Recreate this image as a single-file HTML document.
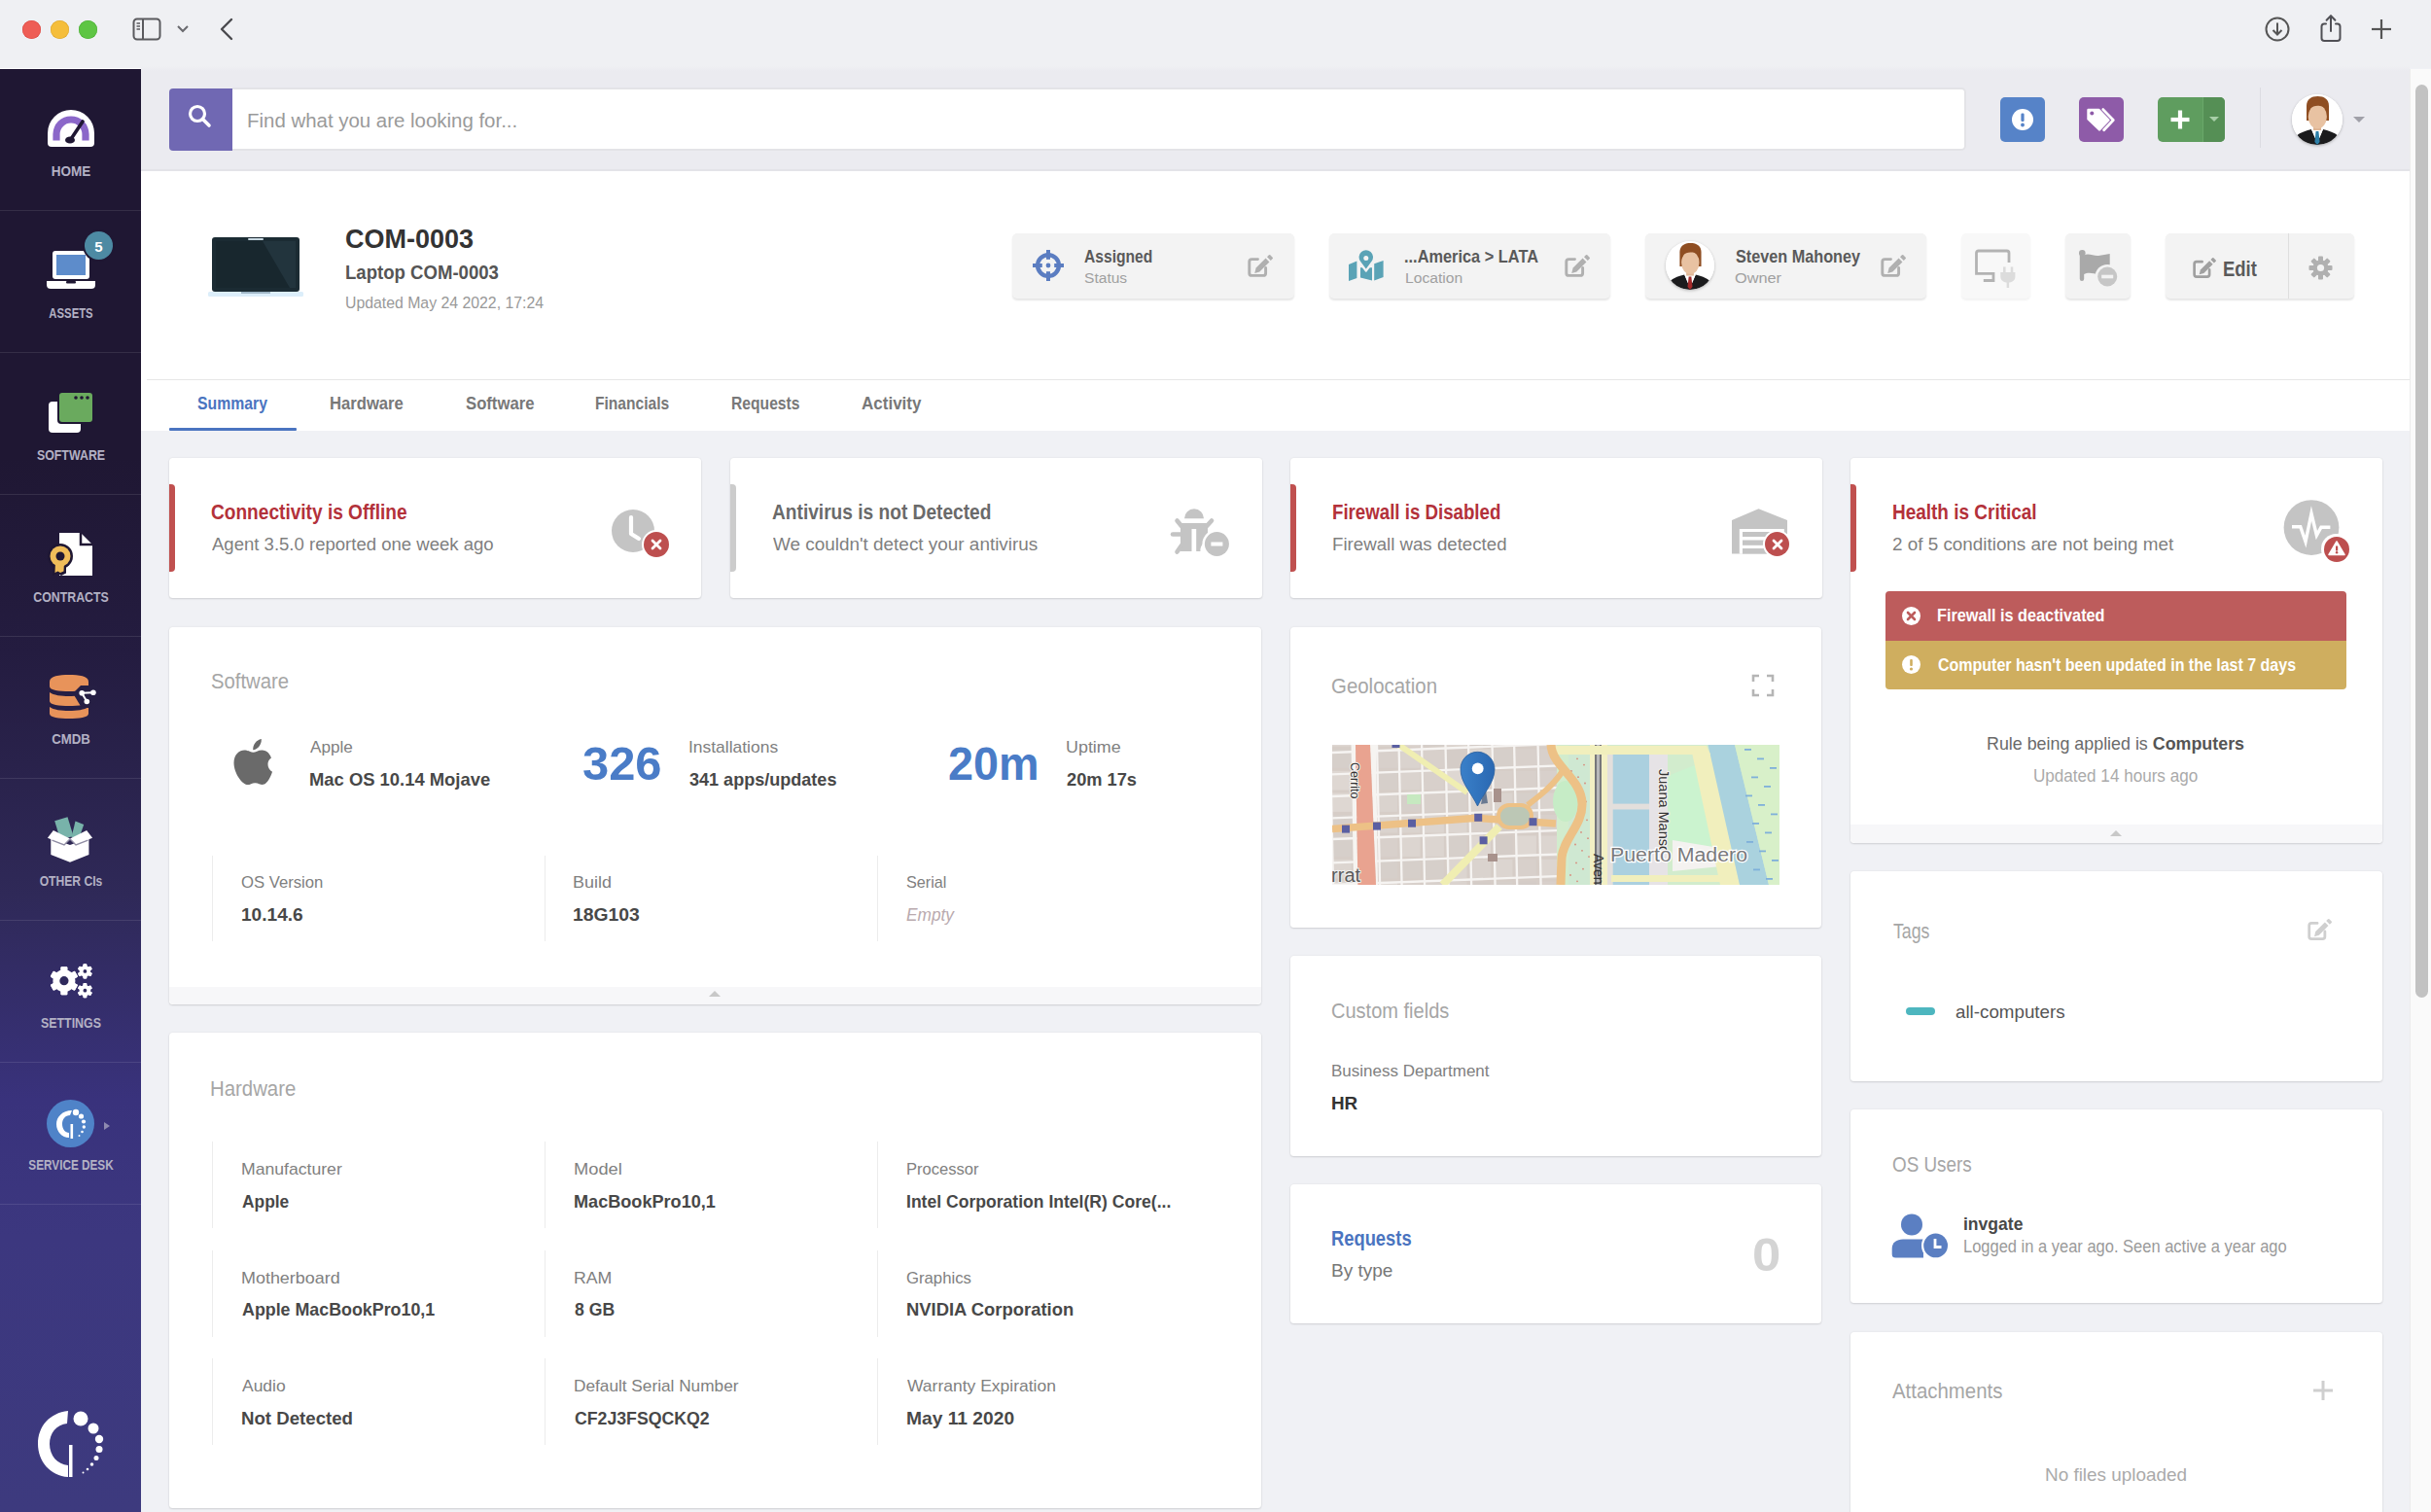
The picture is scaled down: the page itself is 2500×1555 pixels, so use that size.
<!DOCTYPE html><html><head><meta charset="utf-8"><title>COM-0003</title><style>
*{margin:0;padding:0;box-sizing:border-box}
html,body{width:2500px;height:1555px;overflow:hidden;background:#f0f1f5;font-family:"Liberation Sans",sans-serif}
.t{position:absolute;line-height:1;white-space:nowrap}
.b{position:absolute;display:block}
.card{position:absolute;background:#fff;border-radius:3.5px;box-shadow:0 1px 2px rgba(0,0,0,.12),0 0 2px rgba(0,0,0,.08)}
.sc{position:absolute;background:#f3f3f3;border-radius:5px;box-shadow:0 2px 2px rgba(0,0,0,.10)}
</style></head><body><div class="b" style="left:0px;top:0px;width:2500px;height:70px;background:#eff0f3"></div><div class="b" style="left:23.0px;top:21px;width:19px;height:19px;border-radius:50%;background:#ee5d55;box-shadow:inset 0 0 0 0.5px #d9463f"></div><div class="b" style="left:52.0px;top:21px;width:19px;height:19px;border-radius:50%;background:#f5be3b;box-shadow:inset 0 0 0 0.5px #dba42a"></div><div class="b" style="left:81.0px;top:21px;width:19px;height:19px;border-radius:50%;background:#5ec544;box-shadow:inset 0 0 0 0.5px #48ad32"></div><svg class="b" style="left:134px;top:17px;" width="34" height="26" viewBox="0 0 34 26"><rect x="3.5" y="2.5" width="27" height="21" rx="3.5" fill="none" stroke="#5a5a5e" stroke-width="2"/><line x1="13" y1="3" x2="13" y2="23" stroke="#5a5a5e" stroke-width="2"/><g stroke="#5a5a5e" stroke-width="1.5"><line x1="6.5" y1="7" x2="10" y2="7"/><line x1="6.5" y1="10" x2="10" y2="10"/><line x1="6.5" y1="13" x2="10" y2="13"/></g></svg><svg class="b" style="left:180px;top:24px;" width="16" height="12" viewBox="0 0 16 12"><polyline points="3,3 8,8 13,3" fill="none" stroke="#6a6a6e" stroke-width="2"/></svg><svg class="b" style="left:222px;top:17px;" width="22" height="26" viewBox="0 0 22 26"><polyline points="16,3 6,13 16,23" fill="none" stroke="#4a4a4e" stroke-width="2.4" stroke-linecap="round" stroke-linejoin="round"/></svg><svg class="b" style="left:2328px;top:16px;" width="28" height="28" viewBox="0 0 28 28"><circle cx="14" cy="14" r="11.5" fill="none" stroke="#555" stroke-width="2"/><line x1="14" y1="7.5" x2="14" y2="19" stroke="#555" stroke-width="2"/><polyline points="9.5,15 14,19.5 18.5,15" fill="none" stroke="#555" stroke-width="2"/></svg><svg class="b" style="left:2383px;top:14px;" width="28" height="32" viewBox="0 0 28 32"><path d="M9 10.5 H7.3 Q4.5 10.5 4.5 13.3 V25.2 Q4.5 28 7.3 28 H20.7 Q23.5 28 23.5 25.2 V13.3 Q23.5 10.5 20.7 10.5 H19" fill="none" stroke="#505055" stroke-width="2" stroke-linecap="round"/><line x1="14" y1="2.5" x2="14" y2="18" stroke="#505055" stroke-width="2" stroke-linecap="round"/><polyline points="9.6,6.8 14,2.2 18.4,6.8" fill="none" stroke="#505055" stroke-width="2" stroke-linecap="round" stroke-linejoin="round"/></svg><svg class="b" style="left:2435px;top:16px;" width="28" height="28" viewBox="0 0 28 28"><line x1="14" y1="4" x2="14" y2="24" stroke="#555" stroke-width="2.2"/><line x1="4" y1="14" x2="24" y2="14" stroke="#555" stroke-width="2.2"/></svg><div class="b" style="left:0px;top:71px;width:145px;height:1484px;background:linear-gradient(180deg,#1f1733 0px,#1f1733 400px,#241c40 600px,#2f2958 850px,#39327c 1060px,#3c377f 1200px,#3d3a7e 1484px)"></div><div class="b" style="left:0px;top:70px;width:145px;height:1px;background:#fff"></div><div class="b" style="left:0px;top:216px;width:145px;height:1px;background:rgba(255,255,255,.10)"></div><div class="b" style="left:0px;top:362px;width:145px;height:1px;background:rgba(255,255,255,.10)"></div><div class="b" style="left:0px;top:508px;width:145px;height:1px;background:rgba(255,255,255,.10)"></div><div class="b" style="left:0px;top:654px;width:145px;height:1px;background:rgba(255,255,255,.10)"></div><div class="b" style="left:0px;top:800px;width:145px;height:1px;background:rgba(255,255,255,.10)"></div><div class="b" style="left:0px;top:946px;width:145px;height:1px;background:rgba(255,255,255,.10)"></div><div class="b" style="left:0px;top:1092px;width:145px;height:1px;background:rgba(255,255,255,.10)"></div><div class="b" style="left:0px;top:1238px;width:145px;height:1px;background:rgba(255,255,255,.10)"></div><div class="t" id="t1" style="left:72.5px;top:169.18px;font-size:14.2px;color:#b3b1c4;font-weight:700;transform:scaleX(0.9524) translateX(-50%);transform-origin:0 0;">HOME</div><div class="t" id="t2" style="left:72.5px;top:315.18px;font-size:14.2px;color:#b3b1c4;font-weight:700;transform:scaleX(0.7982) translateX(-50%);transform-origin:0 0;">ASSETS</div><div class="t" id="t3" style="left:72.5px;top:461.18px;font-size:14.2px;color:#b3b1c4;font-weight:700;transform:scaleX(0.8728) translateX(-50%);transform-origin:0 0;">SOFTWARE</div><div class="t" id="t4" style="left:72.5px;top:607.18px;font-size:14.2px;color:#b3b1c4;font-weight:700;transform:scaleX(0.8697) translateX(-50%);transform-origin:0 0;">CONTRACTS</div><div class="t" id="t5" style="left:72.5px;top:753.18px;font-size:14.2px;color:#b3b1c4;font-weight:700;transform:scaleX(0.9302) translateX(-50%);transform-origin:0 0;">CMDB</div><div class="t" id="t6" style="left:72.5px;top:899.18px;font-size:14.2px;color:#b3b1c4;font-weight:700;transform:scaleX(0.8533) translateX(-50%);transform-origin:0 0;">OTHER CIs</div><div class="t" id="t7" style="left:72.5px;top:1045.18px;font-size:14.2px;color:#b3b1c4;font-weight:700;transform:scaleX(0.8732) translateX(-50%);transform-origin:0 0;">SETTINGS</div><div class="t" id="t8" style="left:72.5px;top:1191.18px;font-size:14.2px;color:#b3b1c4;font-weight:700;transform:scaleX(0.8286) translateX(-50%);transform-origin:0 0;">SERVICE DESK</div><svg class="b" style="left:46px;top:110px;" width="54" height="44" viewBox="0 0 54 44"><path d="M3 27 A24 24 0 0 1 51 27 V37 Q51 41 47 41 H7 Q3 41 3 37 Z" fill="#fff"/>
<path d="M8.4 34.5 V28 A18.6 18.6 0 0 1 45.6 28 V34.5 H38.4 V28 A11.4 11.4 0 0 0 15.6 28 V34.5 Z" fill="#8b67c9"/>
<line x1="27" y1="33" x2="39" y2="15" stroke="#1f1733" stroke-width="3.6" stroke-linecap="round"/>
<ellipse cx="26" cy="34" rx="5" ry="3.6" fill="#1f1733"/></svg><svg class="b" style="left:46px;top:254px;" width="54" height="46" viewBox="0 0 54 46"><rect x="8" y="4" width="38" height="29" rx="3" fill="#fff"/>
<rect x="12" y="8" width="30" height="21" fill="#5d8ccb"/>
<path d="M2 35 H52 V39 C52 42 50 43 48 43 H6 C4 43 2 42 2 39 Z" fill="#fff"/>
<rect x="22" y="35" width="10" height="2.5" rx="1" fill="#1f1733"/></svg><div class="b" style="left:85px;top:236px;width:33px;height:33px;border-radius:50%;background:#1f1733"></div><div class="b" style="left:87px;top:238px;width:29px;height:29px;border-radius:50%;background:#4d8aa3"></div><div class="t" id="t9" style="left:101.5px;top:245.60px;font-size:15px;color:#fff;font-weight:700;transform:scaleX(1.0000) translateX(-50%);transform-origin:0 0;">5</div><svg class="b" style="left:46px;top:400px;" width="54" height="48" viewBox="0 0 54 48"><rect x="4" y="13" width="33" height="32" rx="4" fill="#fff"/>
<rect x="13" y="2" width="38" height="34" rx="4" fill="#1f1733"/>
<rect x="15" y="4" width="34" height="30" rx="3" fill="#6aaa5e"/>
<g fill="#1f1733"><circle cx="32" cy="9" r="1.8"/><circle cx="38" cy="9" r="1.8"/><circle cx="44" cy="9" r="1.8"/></g></svg><svg class="b" style="left:44px;top:545px;" width="56" height="50" viewBox="0 0 56 50"><path d="M17 3 H39 L51 15 V47 H17 Z" fill="#fff"/>
<path d="M39 3 V15 H51" fill="none" stroke="#1f1733" stroke-width="2.5"/>
<circle cx="18" cy="27" r="13" fill="#1f1733"/>
<path d="M11 33 L10 47 L15 44.5 L19 47 L24 44.5 L24 33 Z" fill="#1f1733"/>
<path d="M13 33 L12.5 44 L15.5 42.5 L18 44 L21.5 42.5 L22 33 Z" fill="#f0bd5a"/>
<circle cx="18" cy="27" r="10.5" fill="#f0bd5a"/>
<circle cx="18" cy="27" r="4.5" fill="#1f1733"/></svg><svg class="b" style="left:48px;top:692px;" width="54" height="52" viewBox="0 0 54 52"><g fill="#e8935a">
<path d="M3 9 C3 3 13 2 23 2 C33 2 43 3 43 9 V14 C43 18 33 19 23 19 C13 19 3 18 3 14 Z"/>
<path d="M3 20 C7 23 15 24 23 24 C31 24 39 23 43 20 V29 C43 33 33 34 23 34 C13 34 3 33 3 29 Z"/>
<path d="M3 35 C7 38 15 39 23 39 C31 39 39 38 43 35 V42 C43 46 33 47 23 47 C13 47 3 46 3 42 Z"/>
</g>
<path d="M27 21 L35 13 H52 V28 L44 36 H36 Z" fill="#261f44"/>
<g stroke="#fff" stroke-width="2"><line x1="36.2" y1="20.8" x2="47.9" y2="20.3"/><line x1="36.2" y1="20.8" x2="41.3" y2="29.5"/></g>
<g fill="#fff"><circle cx="36.2" cy="20.8" r="2.8"/><circle cx="47.9" cy="20.3" r="2.8"/><circle cx="41.3" cy="29.5" r="2.8"/></g></svg><svg class="b" style="left:46px;top:836px;" width="52" height="54" viewBox="0 0 52 54"><path d="M10.2 8.2 L23.5 4.3 L29.5 24 L16 27.5 Z" fill="#78b3aa"/>
<path d="M31.5 8.6 L40.2 12 L35 27 L27.5 25 Z" fill="#78b3aa"/>
<path d="M6.3 26 L26 33 L45.4 26 V43 L26 50.7 L6.3 43 Z" fill="#fff"/>
<path d="M2.9 25.8 L8.9 18 L26 26.6 L20 32.6 Z" fill="#fff"/>
<path d="M49.1 25.8 L43.1 18 L26 26.6 L32 32.6 Z" fill="#fff"/>
<polyline points="7.5,28.2 20,32.9 26,27 32,32.9 44.5,28.2" fill="none" stroke="#8f8ca3" stroke-width="1.3"/></svg><svg class="b" style="left:46px;top:980px;" width="54" height="54" viewBox="0 0 54 54"><circle cx="19.9" cy="28.7" r="11.5" fill="#fff"/><rect x="16.5" y="14.2" width="6.8" height="29.0" rx="1" fill="#fff" transform="rotate(0.0 19.9 28.7)"/><rect x="16.5" y="14.2" width="6.8" height="29.0" rx="1" fill="#fff" transform="rotate(60.0 19.9 28.7)"/><rect x="16.5" y="14.2" width="6.8" height="29.0" rx="1" fill="#fff" transform="rotate(120.0 19.9 28.7)"/><rect x="16.5" y="14.2" width="6.8" height="29.0" rx="1" fill="#fff" transform="rotate(180.0 19.9 28.7)"/><rect x="16.5" y="14.2" width="6.8" height="29.0" rx="1" fill="#fff" transform="rotate(240.0 19.9 28.7)"/><rect x="16.5" y="14.2" width="6.8" height="29.0" rx="1" fill="#fff" transform="rotate(300.0 19.9 28.7)"/><circle cx="19.9" cy="28.7" r="4.6" fill="#2f2a5c"/><circle cx="41.4" cy="18.9" r="5.8" fill="#fff"/><rect x="39.5" y="11.299999999999999" width="3.8" height="15.2" rx="1" fill="#fff" transform="rotate(0.0 41.4 18.9)"/><rect x="39.5" y="11.299999999999999" width="3.8" height="15.2" rx="1" fill="#fff" transform="rotate(60.0 41.4 18.9)"/><rect x="39.5" y="11.299999999999999" width="3.8" height="15.2" rx="1" fill="#fff" transform="rotate(120.0 41.4 18.9)"/><rect x="39.5" y="11.299999999999999" width="3.8" height="15.2" rx="1" fill="#fff" transform="rotate(180.0 41.4 18.9)"/><rect x="39.5" y="11.299999999999999" width="3.8" height="15.2" rx="1" fill="#fff" transform="rotate(240.0 41.4 18.9)"/><rect x="39.5" y="11.299999999999999" width="3.8" height="15.2" rx="1" fill="#fff" transform="rotate(300.0 41.4 18.9)"/><circle cx="41.4" cy="18.9" r="1.9" fill="#2f2a5c"/><circle cx="41.4" cy="38.7" r="5.8" fill="#fff"/><rect x="39.5" y="31.1" width="3.8" height="15.2" rx="1" fill="#fff" transform="rotate(0.0 41.4 38.7)"/><rect x="39.5" y="31.1" width="3.8" height="15.2" rx="1" fill="#fff" transform="rotate(60.0 41.4 38.7)"/><rect x="39.5" y="31.1" width="3.8" height="15.2" rx="1" fill="#fff" transform="rotate(120.0 41.4 38.7)"/><rect x="39.5" y="31.1" width="3.8" height="15.2" rx="1" fill="#fff" transform="rotate(180.0 41.4 38.7)"/><rect x="39.5" y="31.1" width="3.8" height="15.2" rx="1" fill="#fff" transform="rotate(240.0 41.4 38.7)"/><rect x="39.5" y="31.1" width="3.8" height="15.2" rx="1" fill="#fff" transform="rotate(300.0 41.4 38.7)"/><circle cx="41.4" cy="38.7" r="1.9" fill="#302b5d"/></svg><div class="b" style="left:48px;top:1131px;width:49px;height:49px;border-radius:50%;background:#4f83c8"></div><svg class="b" style="left:48px;top:1131px;" width="49" height="49" viewBox="0 0 49 49"><path d="M26 11 C16 11 10 18 10 25 C10 33 16 39 23 39 V34 C19 34 16 30 16 25 C16 20 19 16 24 16 Z" fill="#fff"/>
<rect x="24.5" y="25" width="2.6" height="15" fill="#fff"/>
<g fill="#fff"><circle cx="30" cy="13" r="3.2"/><circle cx="35.5" cy="17" r="2.6"/><circle cx="38" cy="22.5" r="2.1"/><circle cx="38.3" cy="28" r="1.7"/><circle cx="36.5" cy="33" r="1.3"/><circle cx="33.5" cy="37" r="1"/></g></svg><svg class="b" style="left:105px;top:1153px;" width="10" height="10" viewBox="0 0 10 10"><polygon points="2,1 8,5 2,9" fill="#8e8ab0"/></svg><svg class="b" style="left:36px;top:1448px;" width="74" height="74" viewBox="0 0 74 74"><path d="M34 3 C15 5 3 19 3 37 C3 55 16 70 34 71 V59 C23 58 15 49 15 37 C15 26 22 17 33 16 Z" fill="#fff"/>
<rect x="35" y="38" width="3.5" height="33" fill="#fff"/>
<g fill="#fff"><circle cx="47" cy="11" r="7.5"/><circle cx="60" cy="21" r="5.5"/><circle cx="66" cy="32" r="4.2"/><circle cx="66" cy="42.5" r="3.5"/><circle cx="63" cy="51.5" r="2.5"/><circle cx="58.5" cy="58" r="1.8"/><circle cx="54" cy="63" r="1.3"/><circle cx="49.5" cy="66.5" r="1"/></g></svg><div class="b" style="left:145px;top:71px;width:2333px;height:105px;background:#ebebf0"></div><div class="b" style="left:145px;top:174px;width:2333px;height:2px;background:#e3e3e8"></div><div class="b" style="left:145px;top:68px;width:2333px;height:5px;background:linear-gradient(#eff0f3,#ebebf0)"></div><div class="b" style="left:174px;top:91px;width:65px;height:64px;background:#7068b3;border-radius:4px 0 0 4px"></div><svg class="b" style="left:190px;top:104px;" width="32" height="32" viewBox="0 0 32 32"><circle cx="13" cy="13" r="7.5" fill="none" stroke="#fff" stroke-width="3.2"/><line x1="18.5" y1="18.5" x2="25" y2="25" stroke="#fff" stroke-width="3.6" stroke-linecap="round"/></svg><div class="b" style="left:239px;top:90px;width:1783px;height:65px;background:#fff;border:2px solid #e3e3e7;border-left:none;border-radius:0 5px 5px 0"></div><div class="t" id="t10" style="left:253.8px;top:113.65px;font-size:20.5px;color:#9a9a9a;transform:scaleX(0.9964);transform-origin:0 0;">Find what you are looking for...</div><div class="b" style="left:2057px;top:100px;width:46px;height:46px;background:#5683c8;border-radius:5px"></div><svg class="b" style="left:2066px;top:109px;" width="28" height="28" viewBox="0 0 28 28"><circle cx="14" cy="14" r="11" fill="#fff"/><rect x="12.4" y="7.5" width="3.2" height="8.5" rx="1.2" fill="#5683c8"/><circle cx="14" cy="19.5" r="1.9" fill="#5683c8"/></svg><div class="b" style="left:2138px;top:100px;width:46px;height:46px;background:#8e5ba8;border-radius:5px"></div><svg class="b" style="left:2143px;top:105px;" width="36" height="36" viewBox="0 0 36 36"><path d="M4.5 8 H15.5 L25.5 18.5 L16 28.5 L4.5 17.5 Z" fill="#fff" stroke="#fff" stroke-width="2.4" stroke-linejoin="round"/><circle cx="8.3" cy="11.6" r="2" fill="#8e5ba8"/><polyline points="19.8,7.6 30.3,18.5 20.6,28.8" fill="none" stroke="#fff" stroke-width="2.8" stroke-linejoin="round" stroke-linecap="round"/></svg><div class="b" style="left:2219px;top:100px;width:69px;height:46px;background:#5f9d5f;border-radius:5px"></div><div class="b" style="left:2265px;top:100px;width:23px;height:46px;background:#558f55;border-radius:0 5px 5px 0"></div><div class="b" style="left:2265px;top:100px;width:1px;height:46px;background:#6aa86a"></div><svg class="b" style="left:2230px;top:111px;" width="24" height="24" viewBox="0 0 24 24"><line x1="12" y1="2.5" x2="12" y2="21.5" stroke="#fff" stroke-width="4.2"/><line x1="2.5" y1="12" x2="21.5" y2="12" stroke="#fff" stroke-width="4.2"/></svg><svg class="b" style="left:2270px;top:118px;" width="14" height="10" viewBox="0 0 14 10"><polygon points="2,2 12,2 7,7" fill="#a8cfa8"/></svg><div class="b" style="left:2324px;top:90px;width:1px;height:62px;background:#dcdce2"></div><div class="b" style="left:2357px;top:97px;width:52px;height:52px;border-radius:50%;background:#fff;box-shadow:0 1px 3px rgba(0,0,0,.25);overflow:hidden"><svg width="52" height="52" viewBox="0 0 52 52" style="display:block"><rect width="52" height="52" fill="#fff"/>
<path d="M4 43 C9 39 15 37 20 36 L26 50 L32 36 C37 37 43 39 48 43 C44 49 36 52 26 52 C16 52 8 49 4 43 Z" fill="#1b1b1d"/>
<path d="M20 36 L26 50 L32 36 Z" fill="#fff"/>
<path d="M24.6 38 H27.4 L28.6 49 L26 52 L23.4 49 Z" fill="#2d7fa8"/>
<rect x="22" y="29" width="8" height="8" fill="#dfb594"/>
<path d="M15 27 V12 C15 5 20 2 26.5 2 C33 2 38 5 38 12 V27 Z" fill="#8f4e22"/>
<ellipse cx="26.3" cy="23" rx="9.6" ry="12.2" fill="#e8c2a2"/>
<path d="M16.5 20 C17 10 22 6 27 6 C33 6 37 10 37 18 C35 14 32 12.5 29 12 C25 11.5 21 12 18.5 15 Z" fill="#8f4e22"/>
</svg></div><svg class="b" style="left:2418px;top:118px;" width="16" height="10" viewBox="0 0 16 10"><polygon points="2,2 14,2 8,8" fill="#a0a0a8"/></svg><div class="b" style="left:145px;top:176px;width:2333px;height:267px;background:#fff"></div><div class="b" style="left:151px;top:390px;width:2327px;height:1px;background:#e6e6e6"></div><svg class="b" style="left:210px;top:238px;" width="104" height="72" viewBox="0 0 104 72">
<rect x="8" y="6" width="90" height="56" rx="3" fill="#1b2b33"/>
<rect x="12" y="10" width="82" height="48" fill="#18272e"/>
<polygon points="60,10 94,10 94,58 88,58" fill="#22343d"/>
<rect x="45" y="7" width="16" height="2" rx="1" fill="#c9d9e2"/>
<rect x="4" y="62" width="98" height="5" rx="1.5" fill="#dceefa"/>
<rect x="38" y="62" width="30" height="2" fill="#9fb6c6"/></svg><div class="t" id="t11" style="left:354.6px;top:231.58px;font-size:27.2px;color:#333;font-weight:700;transform:scaleX(0.9924);transform-origin:0 0;">COM-0003</div><div class="t" id="t12" style="left:355.2px;top:271.26px;font-size:19.3px;color:#555;font-weight:700;transform:scaleX(0.9632);transform-origin:0 0;">Laptop COM-0003</div><div class="t" id="t13" style="left:355.2px;top:302.70px;font-size:16.3px;color:#999;transform:scaleX(0.9714);transform-origin:0 0;">Updated May 24 2022, 17:24</div><div class="sc" style="left:1041px;top:240px;width:290px;height:67px"></div><svg class="b" style="left:1059.5px;top:255px;" width="36" height="36" viewBox="0 0 36 36"><circle cx="18" cy="18" r="10.9" fill="none" stroke="#5b7dc1" stroke-width="4.4"/><circle cx="18" cy="18" r="2.4" fill="#5b7dc1"/><g stroke="#5b7dc1" stroke-width="4"><line x1="18" y1="2" x2="18" y2="11.8"/><line x1="18" y1="24.2" x2="18" y2="34"/><line x1="2" y1="18" x2="11.8" y2="18"/><line x1="24.2" y1="18" x2="34" y2="18"/></g></svg><div class="t" id="t14" style="left:1115.4px;top:255.93px;font-size:17.8px;color:#5a5a5a;font-weight:700;transform:scaleX(0.8785);transform-origin:0 0;">Assigned</div><div class="t" id="t15" style="left:1115.0px;top:278.26px;font-size:15.4px;color:#a0a0a0;transform:scaleX(1.0119);transform-origin:0 0;">Status</div><svg class="b" style="left:1281px;top:261px;" width="29" height="26" viewBox="0 0 29 26"><path d="M12.5 5.6 H6.3 Q3.8 5.6 3.8 8.1 V19.9 Q3.8 22.4 6.3 22.4 H18.1 Q20.6 22.4 20.6 19.9 V14.5" fill="none" stroke="#b0b0b0" stroke-width="2.9" stroke-linecap="round"/><path d="M9.3 19.9 L10.6 14.6 L20.6 4.6 L24.4 8.4 L14.4 18.4 Z" fill="#b0b0b0"/><path d="M22 3.2 L23.9 1.3 Q24.6 0.6 25.3 1.3 L27.7 3.7 Q28.4 4.4 27.7 5.1 L25.8 7 Z" fill="#b0b0b0"/></svg><div class="sc" style="left:1367px;top:240px;width:289px;height:67px"></div><svg class="b" style="left:1384px;top:256px;" width="42" height="36" viewBox="0 0 42 36"><g fill="#5aa3b6"><path d="M3 16 L11.4 12.6 V30 L3 33 Z"/><path d="M15 19.2 L27 19.2 V32.6 L15 29.4 Z"/><path d="M29.2 15.2 L38.6 12 V29 L29.2 32.6 Z"/></g><path d="M20.8 22.5 L13.8 13 A8.3 8.3 0 1 1 27.8 13 Z" fill="#5aa3b6" stroke="#f3f3f3" stroke-width="2.2" stroke-linejoin="round"/><circle cx="20.8" cy="9.4" r="2.5" fill="#f3f3f3"/></svg><div class="t" id="t16" style="left:1444.2px;top:255.93px;font-size:17.8px;color:#5a5a5a;font-weight:700;transform:scaleX(0.9200);transform-origin:0 0;">...America &gt; LATA</div><div class="t" id="t17" style="left:1445.0px;top:278.26px;font-size:15.4px;color:#a0a0a0;transform:scaleX(1.0175);transform-origin:0 0;">Location</div><svg class="b" style="left:1607px;top:261px;" width="29" height="26" viewBox="0 0 29 26"><path d="M12.5 5.6 H6.3 Q3.8 5.6 3.8 8.1 V19.9 Q3.8 22.4 6.3 22.4 H18.1 Q20.6 22.4 20.6 19.9 V14.5" fill="none" stroke="#b0b0b0" stroke-width="2.9" stroke-linecap="round"/><path d="M9.3 19.9 L10.6 14.6 L20.6 4.6 L24.4 8.4 L14.4 18.4 Z" fill="#b0b0b0"/><path d="M22 3.2 L23.9 1.3 Q24.6 0.6 25.3 1.3 L27.7 3.7 Q28.4 4.4 27.7 5.1 L25.8 7 Z" fill="#b0b0b0"/></svg><div class="sc" style="left:1692px;top:240px;width:289px;height:67px"></div><div class="b" style="left:1713px;top:248px;width:50px;height:50px;border-radius:50%;background:#fff;box-shadow:0 1px 3px rgba(0,0,0,.25);overflow:hidden"><svg width="50" height="50" viewBox="0 0 52 52" style="display:block"><rect width="52" height="52" fill="#fff"/>
<path d="M4 43 C9 39 15 37 20 36 L26 50 L32 36 C37 37 43 39 48 43 C44 49 36 52 26 52 C16 52 8 49 4 43 Z" fill="#1b1b1d"/>
<path d="M20 36 L26 50 L32 36 Z" fill="#fff"/>
<path d="M24.6 38 H27.4 L28.6 49 L26 52 L23.4 49 Z" fill="#a32a2a"/>
<rect x="22" y="29" width="8" height="8" fill="#dfb594"/>
<path d="M15 27 V12 C15 5 20 2 26.5 2 C33 2 38 5 38 12 V27 Z" fill="#8f4e22"/>
<ellipse cx="26.3" cy="23" rx="9.6" ry="12.2" fill="#e8c2a2"/>
<path d="M16.5 20 C17 10 22 6 27 6 C33 6 37 10 37 18 C35 14 32 12.5 29 12 C25 11.5 21 12 18.5 15 Z" fill="#8f4e22"/>
</svg></div><div class="t" id="t18" style="left:1784.6px;top:255.93px;font-size:17.8px;color:#5a5a5a;font-weight:700;transform:scaleX(0.9128);transform-origin:0 0;">Steven Mahoney</div><div class="t" id="t19" style="left:1783.5px;top:278.26px;font-size:15.4px;color:#a0a0a0;transform:scaleX(1.0600);transform-origin:0 0;">Owner</div><svg class="b" style="left:1932px;top:261px;" width="29" height="26" viewBox="0 0 29 26"><path d="M12.5 5.6 H6.3 Q3.8 5.6 3.8 8.1 V19.9 Q3.8 22.4 6.3 22.4 H18.1 Q20.6 22.4 20.6 19.9 V14.5" fill="none" stroke="#b0b0b0" stroke-width="2.9" stroke-linecap="round"/><path d="M9.3 19.9 L10.6 14.6 L20.6 4.6 L24.4 8.4 L14.4 18.4 Z" fill="#b0b0b0"/><path d="M22 3.2 L23.9 1.3 Q24.6 0.6 25.3 1.3 L27.7 3.7 Q28.4 4.4 27.7 5.1 L25.8 7 Z" fill="#b0b0b0"/></svg><div class="sc" style="left:2017px;top:240px;width:71px;height:67px;background:#f8f8f8;box-shadow:0 2px 2px rgba(0,0,0,.05)"></div><svg class="b" style="left:2030px;top:255px;" width="46" height="44" viewBox="0 0 46 44"><path d="M20 26.4 H2.5 V5.2 Q2.5 3 4.7 3 H33.8 Q36 3 36 5.2 V15" fill="none" stroke="#b3b3b3" stroke-width="2.8"/><path d="M20 25 V33.5 H9.8" fill="none" stroke="#b3b3b3" stroke-width="2.8"/><g fill="#dcdcdc"><path d="M27.3 25 H42.4 V29.5 C42.4 33.5 39 35.5 34.85 35.5 C30.7 35.5 27.3 33.5 27.3 29.5 Z"/><rect x="30" y="19.4" width="2.6" height="6"/><rect x="37.7" y="19.4" width="2.6" height="6"/><rect x="33.6" y="34" width="2.5" height="7"/></g></svg><div class="sc" style="left:2124px;top:240px;width:67px;height:67px"></div><svg class="b" style="left:2136px;top:254px;" width="48" height="46" viewBox="0 0 48 46"><rect x="2.8" y="5" width="4.4" height="30" rx="2.2" fill="#a9a9a9"/><circle cx="5.3" cy="6.2" r="3.3" fill="#a9a9a9"/><path d="M7 8.5 C12 6 17 9.5 22 9 C26 8.5 30 7.5 33.7 7 V26 C29 27 26 28.5 22 28 C17 27.5 12 25.5 7 28 Z" fill="#a9a9a9"/><circle cx="31.2" cy="30.5" r="12.6" fill="#f3f3f3"/><circle cx="31.2" cy="30.5" r="10" fill="#c6c6c6"/><rect x="25.2" y="28.7" width="12" height="3.6" fill="#f3f3f3"/></svg><div class="sc" style="left:2227px;top:240px;width:194px;height:67px"></div><div class="b" style="left:2353px;top:240px;width:1px;height:67px;background:#dedede"></div><svg class="b" style="left:2253px;top:264px;" width="27" height="24" viewBox="0 0 29 26"><path d="M12.5 5.6 H6.3 Q3.8 5.6 3.8 8.1 V19.9 Q3.8 22.4 6.3 22.4 H18.1 Q20.6 22.4 20.6 19.9 V14.5" fill="none" stroke="#a0a0a0" stroke-width="2.9" stroke-linecap="round"/><path d="M9.3 19.9 L10.6 14.6 L20.6 4.6 L24.4 8.4 L14.4 18.4 Z" fill="#a0a0a0"/><path d="M22 3.2 L23.9 1.3 Q24.6 0.6 25.3 1.3 L27.7 3.7 Q28.4 4.4 27.7 5.1 L25.8 7 Z" fill="#a0a0a0"/></svg><div class="t" id="t20" style="left:2286.2px;top:265.75px;font-size:21.8px;color:#5a5a5a;font-weight:700;transform:scaleX(0.8463);transform-origin:0 0;">Edit</div><svg class="b" style="left:2372px;top:261px;" width="29" height="29" viewBox="0 0 29 29"><g fill="#b0b0b0"><circle cx="14.5" cy="14.5" r="8"/><rect x="12" y="2.5" width="5" height="24" rx="1" transform="rotate(0 14.5 14.5)"/><rect x="12" y="2.5" width="5" height="24" rx="1" transform="rotate(45 14.5 14.5)"/><rect x="12" y="2.5" width="5" height="24" rx="1" transform="rotate(90 14.5 14.5)"/><rect x="12" y="2.5" width="5" height="24" rx="1" transform="rotate(135 14.5 14.5)"/></g><circle cx="14.5" cy="14.5" r="3.6" fill="#f3f3f3"/></svg><div class="t" id="t21" style="left:202.6px;top:406.09px;font-size:18.2px;color:#4a74c0;font-weight:700;transform:scaleX(0.8675);transform-origin:0 0;">Summary</div><div class="t" id="t22" style="left:338.9px;top:406.09px;font-size:18.2px;color:#787878;font-weight:700;transform:scaleX(0.9146);transform-origin:0 0;">Hardware</div><div class="t" id="t23" style="left:478.8px;top:406.09px;font-size:18.2px;color:#787878;font-weight:700;transform:scaleX(0.9171);transform-origin:0 0;">Software</div><div class="t" id="t24" style="left:612.1px;top:406.09px;font-size:18.2px;color:#787878;font-weight:700;transform:scaleX(0.8557);transform-origin:0 0;">Financials</div><div class="t" id="t25" style="left:751.7px;top:406.09px;font-size:18.2px;color:#787878;font-weight:700;transform:scaleX(0.8605);transform-origin:0 0;">Requests</div><div class="t" id="t26" style="left:885.8px;top:406.09px;font-size:18.2px;color:#787878;font-weight:700;transform:scaleX(0.9354);transform-origin:0 0;">Activity</div><div class="b" style="left:174px;top:440px;width:131px;height:3px;background:#4a74c0;border-radius:1px"></div><div class="card" style="left:174px;top:471px;width:547px;height:144px;"></div><div class="b" style="left:174px;top:498px;width:6px;height:90px;background:#c0504f;border-radius:0 4px 4px 0"></div><div class="t" id="t27" style="left:217.1px;top:517.20px;font-size:21.5px;color:#b3313a;font-weight:700;transform:scaleX(0.8881);transform-origin:0 0;">Connectivity is Offline</div><div class="t" id="t28" style="left:218.0px;top:550.51px;font-size:18.3px;color:#7f7f7f;transform:scaleX(1.0140);transform-origin:0 0;">Agent 3.5.0 reported one week ago</div><div class="card" style="left:751px;top:471px;width:547px;height:144px;"></div><div class="b" style="left:751px;top:498px;width:6px;height:90px;background:#cccccc;border-radius:0 4px 4px 0"></div><div class="t" id="t29" style="left:794.0px;top:517.20px;font-size:21.5px;color:#6a6a6a;font-weight:700;transform:scaleX(0.8901);transform-origin:0 0;">Antivirus is not Detected</div><div class="t" id="t30" style="left:795.0px;top:550.51px;font-size:18.3px;color:#7f7f7f;transform:scaleX(1.0341);transform-origin:0 0;">We couldn't detect your antivirus</div><div class="card" style="left:1327px;top:471px;width:547px;height:144px;"></div><div class="b" style="left:1327px;top:498px;width:6px;height:90px;background:#c0504f;border-radius:0 4px 4px 0"></div><div class="t" id="t31" style="left:1370.1px;top:517.20px;font-size:21.5px;color:#b3313a;font-weight:700;transform:scaleX(0.8687);transform-origin:0 0;">Firewall is Disabled</div><div class="t" id="t32" style="left:1370.0px;top:550.51px;font-size:18.3px;color:#7f7f7f;transform:scaleX(1.0213);transform-origin:0 0;">Firewall was detected</div><div class="card" style="left:1903px;top:471px;width:547px;height:396px;"></div><div class="b" style="left:1903px;top:498px;width:6px;height:90px;background:#c0504f;border-radius:0 4px 4px 0"></div><div class="t" id="t33" style="left:1946.1px;top:517.20px;font-size:21.5px;color:#b3313a;font-weight:700;transform:scaleX(0.8820);transform-origin:0 0;">Health is Critical</div><div class="t" id="t34" style="left:1946.0px;top:550.51px;font-size:18.3px;color:#7f7f7f;transform:scaleX(1.0311);transform-origin:0 0;">2 of 5 conditions are not being met</div><svg class="b" style="left:628px;top:523px;" width="46" height="46" viewBox="0 0 46 46"><circle cx="23" cy="23" r="22" fill="#c4c4c4"/><path d="M21 9 V26 L29 31" fill="none" stroke="#fff" stroke-width="4.2" stroke-linecap="round" stroke-linejoin="round"/></svg><div class="b" style="left:659.6px;top:544.8px;width:30px;height:30px;border-radius:50%;background:#fff"></div><div class="b" style="left:661.6px;top:546.8px;width:26px;height:26px;border-radius:50%;background:#bd4f4f"></div><svg class="b" style="left:667.6px;top:552.8px;" width="14" height="14" viewBox="0 0 14 14"><g stroke="#fff" stroke-width="2.8" stroke-linecap="round"><line x1="3" y1="3" x2="11" y2="11"/><line x1="11" y1="3" x2="3" y2="11"/></g></svg><svg class="b" style="left:1200px;top:515px;" width="70" height="62" viewBox="0 0 70 62"><g fill="#c4c4c4"><path d="M18 18.3 A10 10 0 0 1 38 18.3 Z"/><path d="M14 23 H42 V40 C36 44 34 48 34.5 52 H14 Z"/></g><rect x="25.5" y="29" width="4.7" height="24" fill="#fff"/><g stroke="#c4c4c4" stroke-width="4.6" stroke-linecap="round"><line x1="15" y1="26" x2="10.5" y2="20.5"/><line x1="14" y1="34.5" x2="6" y2="34.5"/><line x1="15" y1="46" x2="10.5" y2="52.5"/><line x1="41" y1="26" x2="46" y2="20.5"/></g><circle cx="51.4" cy="44.5" r="15" fill="#fff"/><circle cx="51.4" cy="44.5" r="12.5" fill="#c4c4c4"/><rect x="45.4" y="42.5" width="12" height="4" fill="#fff"/></svg><svg class="b" style="left:1778px;top:520px;" width="62" height="52" viewBox="0 0 62 52"><path d="M3 15 L30.5 3.2 L60 15 V49.6 H3 Z" fill="#c4c4c4"/><rect x="10.8" y="24" width="46" height="25.6" fill="#fff"/><g fill="#c4c4c4"><rect x="14" y="27" width="40" height="5"/><rect x="14" y="35.5" width="40" height="5.3"/><rect x="14" y="44" width="40" height="5.6"/></g></svg><div class="b" style="left:1812.7px;top:544.7px;width:29.6px;height:29.6px;border-radius:50%;background:#fff"></div><div class="b" style="left:1814.7px;top:546.7px;width:25.6px;height:25.6px;border-radius:50%;background:#bd4f4f"></div><svg class="b" style="left:1820.5px;top:552.5px;" width="14" height="14" viewBox="0 0 14 14"><g stroke="#fff" stroke-width="2.8" stroke-linecap="round"><line x1="3" y1="3" x2="11" y2="11"/><line x1="11" y1="3" x2="3" y2="11"/></g></svg><svg class="b" style="left:2347px;top:513px;" width="60" height="60" viewBox="0 0 60 60"><circle cx="30" cy="29.6" r="28.4" fill="#c4c4c4"/><polyline points="10,28.7 18.7,28.7 24,44 30,15 35.4,37.6 40,29.3 49.4,29.3" fill="none" stroke="#fff" stroke-width="3.4" stroke-linejoin="miter" stroke-miterlimit="8"/></svg><div class="b" style="left:2387px;top:549px;width:31px;height:31px;border-radius:50%;background:#fff"></div><div class="b" style="left:2389.5px;top:551.5px;width:26px;height:26px;border-radius:50%;background:#bd4f4f"></div><svg class="b" style="left:2393px;top:554px;" width="20" height="20" viewBox="0 0 20 20"><path d="M10 3 L18 16.5 H2 Z" fill="#fff" stroke="#fff" stroke-width="1.5" stroke-linejoin="round"/><rect x="9" y="7.5" width="2.2" height="5" fill="#bd4f4f"/><circle cx="10.1" cy="14.2" r="1.2" fill="#bd4f4f"/></svg><div class="b" style="left:1939px;top:608px;width:474px;height:51px;background:#bd5c5c;border-radius:4px 4px 0 0"></div><div class="b" style="left:1939px;top:659px;width:474px;height:50px;background:#cfae5f;border-radius:0 0 4px 4px"></div><svg class="b" style="left:1955px;top:623px;" width="21" height="21" viewBox="0 0 21 21"><circle cx="10.5" cy="10.5" r="9.5" fill="#fff"/><g stroke="#bd5c5c" stroke-width="2.6" stroke-linecap="round"><line x1="7" y1="7" x2="14" y2="14"/><line x1="14" y1="7" x2="7" y2="14"/></g></svg><div class="t" id="t35" style="left:1991.7px;top:624.09px;font-size:18.8px;color:#fff;font-weight:700;transform:scaleX(0.8652);transform-origin:0 0;">Firewall is deactivated</div><svg class="b" style="left:1955px;top:673px;" width="21" height="21" viewBox="0 0 21 21"><circle cx="10.5" cy="10.5" r="9.5" fill="#fff"/><rect x="9.2" y="5" width="2.6" height="7" rx="1" fill="#cfae5f"/><circle cx="10.5" cy="15" r="1.6" fill="#cfae5f"/></svg><div class="t" id="t36" style="left:1992.5px;top:675.09px;font-size:18.8px;color:#fff;font-weight:700;transform:scaleX(0.8513);transform-origin:0 0;">Computer hasn't been updated in the last 7 days</div><div class="t" id="t37" style="left:2043.0px;top:755.74px;font-size:18.5px;color:#6a6a6a;transform:scaleX(0.9653);transform-origin:0 0;">Rule being applied is <b style="color:#555">Computers</b></div><div class="t" id="t38" style="left:2091.0px;top:790.19px;font-size:17.5px;color:#aaa;transform:scaleX(0.9767);transform-origin:0 0;">Updated 14 hours ago</div><div class="b" style="left:1903px;top:848px;width:547px;height:19px;background:#f7f7f9;border-radius:0 0 5px 5px"></div><svg class="b" style="left:2169px;top:853px;" width="14" height="8" viewBox="0 0 14 8"><polygon points="1,7 7,1 13,7" fill="#c8c8c8"/></svg><div class="card" style="left:174px;top:645px;width:1123px;height:388px;"></div><div class="t" id="t39" style="left:217.0px;top:690.35px;font-size:21.2px;color:#a6a6a6;transform:scaleX(0.9573);transform-origin:0 0;">Software</div><svg class="b" style="left:236px;top:757px;" width="48" height="54" viewBox="0 0 48 54"><path fill="#6a6a6a" d="M31.5 2 C31.8 6.5 28.5 11.5 23.5 11.8 C23 7.5 26.5 2.8 31.5 2 Z M41 19 C36.5 21.5 36.5 28.5 42 31.5 C40.5 36 37.5 42 33.5 43 C30.5 43.5 29 41.5 25.5 41.5 C22 41.5 20.5 43.5 17.5 43.2 C13 42.5 5 33 5 23.5 C5 15.5 10.5 12 15 12 C18.5 12 21 14 23.5 14 C26 14 28.5 11.8 32.5 12 C35.5 12.2 39 13.5 41 19 Z" transform="translate(-0.84,0.71) scale(1.068,1.143)"/></svg><div class="t" id="t40" style="left:318.8px;top:760.01px;font-size:17px;color:#808080;transform:scaleX(1.0070);transform-origin:0 0;">Apple</div><div class="t" id="t41" style="left:318.0px;top:791.72px;font-size:19px;color:#484848;font-weight:700;transform:scaleX(0.9686);transform-origin:0 0;">Mac OS 10.14 Mojave</div><div class="t" id="t42" style="left:599.0px;top:762.17px;font-size:48px;color:#4a7cc7;font-weight:700;transform:scaleX(1.0179);transform-origin:0 0;">326</div><div class="t" id="t43" style="left:708.4px;top:760.01px;font-size:17px;color:#808080;transform:scaleX(1.0261);transform-origin:0 0;">Installations</div><div class="t" id="t44" style="left:709.4px;top:791.72px;font-size:19px;color:#484848;font-weight:700;transform:scaleX(0.9497);transform-origin:0 0;">341 apps/updates</div><div class="t" id="t45" style="left:974.8px;top:762.17px;font-size:48px;color:#4a7cc7;font-weight:700;transform:scaleX(0.9739);transform-origin:0 0;">20m</div><div class="t" id="t46" style="left:1096.0px;top:760.01px;font-size:17px;color:#808080;transform:scaleX(1.0528);transform-origin:0 0;">Uptime</div><div class="t" id="t47" style="left:1097.0px;top:791.72px;font-size:19px;color:#484848;font-weight:700;transform:scaleX(0.9600);transform-origin:0 0;">20m 17s</div><div class="b" style="left:218px;top:880px;width:1px;height:88px;background:#ececec"></div><div class="b" style="left:560px;top:880px;width:1px;height:88px;background:#ececec"></div><div class="b" style="left:902px;top:880px;width:1px;height:88px;background:#ececec"></div><div class="t" id="t48" style="left:247.6px;top:898.91px;font-size:17px;color:#808080;transform:scaleX(0.9812);transform-origin:0 0;">OS Version</div><div class="t" id="t49" style="left:247.6px;top:930.72px;font-size:19px;color:#484848;font-weight:700;transform:scaleX(1.0048);transform-origin:0 0;">10.14.6</div><div class="t" id="t50" style="left:588.9px;top:898.91px;font-size:17px;color:#808080;transform:scaleX(1.0556);transform-origin:0 0;">Build</div><div class="t" id="t51" style="left:589.0px;top:930.72px;font-size:19px;color:#484848;font-weight:700;transform:scaleX(1.0182);transform-origin:0 0;">18G103</div><div class="t" id="t52" style="left:932.0px;top:898.91px;font-size:17px;color:#808080;transform:scaleX(0.9535);transform-origin:0 0;">Serial</div><div class="t" id="t53" style="left:932.0px;top:930.62px;font-size:19px;color:#b9aaae;font-style:italic;transform:scaleX(0.9091);transform-origin:0 0;">Empty</div><div class="b" style="left:174px;top:1015px;width:1123px;height:18px;background:#f7f7f9;border-radius:0 0 5px 5px"></div><svg class="b" style="left:728px;top:1018px;" width="14" height="8" viewBox="0 0 14 8"><polygon points="1,7 7,1 13,7" fill="#c8c8c8"/></svg><div class="card" style="left:174px;top:1062px;width:1123px;height:489px;"></div><div class="t" id="t54" style="left:216.1px;top:1108.85px;font-size:21.2px;color:#a6a6a6;transform:scaleX(0.9611);transform-origin:0 0;">Hardware</div><div class="b" style="left:218px;top:1174px;width:1px;height:89px;background:#ececec"></div><div class="t" id="t55" style="left:247.6px;top:1194.11px;font-size:17px;color:#808080;transform:scaleX(1.0360);transform-origin:0 0;">Manufacturer</div><div class="t" id="t56" style="left:248.6px;top:1225.92px;font-size:19px;color:#484848;font-weight:700;transform:scaleX(0.9132);transform-origin:0 0;">Apple</div><div class="b" style="left:560px;top:1174px;width:1px;height:89px;background:#ececec"></div><div class="t" id="t57" style="left:589.5px;top:1194.11px;font-size:17px;color:#808080;transform:scaleX(1.0756);transform-origin:0 0;">Model</div><div class="t" id="t58" style="left:589.6px;top:1225.92px;font-size:19px;color:#484848;font-weight:700;transform:scaleX(0.9526);transform-origin:0 0;">MacBookPro10,1</div><div class="b" style="left:902px;top:1174px;width:1px;height:89px;background:#ececec"></div><div class="t" id="t59" style="left:931.6px;top:1194.11px;font-size:17px;color:#808080;transform:scaleX(0.9750);transform-origin:0 0;">Processor</div><div class="t" id="t60" style="left:931.6px;top:1225.92px;font-size:19px;color:#484848;font-weight:700;transform:scaleX(0.9246);transform-origin:0 0;">Intel Corporation Intel(R) Core(...</div><div class="b" style="left:218px;top:1286px;width:1px;height:89px;background:#ececec"></div><div class="t" id="t61" style="left:247.6px;top:1305.61px;font-size:17px;color:#808080;transform:scaleX(1.0547);transform-origin:0 0;">Motherboard</div><div class="t" id="t62" style="left:248.6px;top:1337.42px;font-size:19px;color:#484848;font-weight:700;transform:scaleX(0.9387);transform-origin:0 0;">Apple MacBookPro10,1</div><div class="b" style="left:560px;top:1286px;width:1px;height:89px;background:#ececec"></div><div class="t" id="t63" style="left:589.6px;top:1305.61px;font-size:17px;color:#808080;transform:scaleX(1.0417);transform-origin:0 0;">RAM</div><div class="t" id="t64" style="left:590.6px;top:1337.42px;font-size:19px;color:#484848;font-weight:700;transform:scaleX(0.9273);transform-origin:0 0;">8 GB</div><div class="b" style="left:902px;top:1286px;width:1px;height:89px;background:#ececec"></div><div class="t" id="t65" style="left:931.6px;top:1305.61px;font-size:17px;color:#808080;transform:scaleX(0.9836);transform-origin:0 0;">Graphics</div><div class="t" id="t66" style="left:931.6px;top:1337.42px;font-size:19px;color:#484848;font-weight:700;transform:scaleX(0.9688);transform-origin:0 0;">NVIDIA Corporation</div><div class="b" style="left:218px;top:1397px;width:1px;height:89px;background:#ececec"></div><div class="t" id="t67" style="left:248.6px;top:1417.11px;font-size:17px;color:#808080;transform:scaleX(1.0279);transform-origin:0 0;">Audio</div><div class="t" id="t68" style="left:247.6px;top:1448.92px;font-size:19px;color:#484848;font-weight:700;transform:scaleX(0.9810);transform-origin:0 0;">Not Detected</div><div class="b" style="left:560px;top:1397px;width:1px;height:89px;background:#ececec"></div><div class="t" id="t69" style="left:589.6px;top:1417.11px;font-size:17px;color:#808080;transform:scaleX(1.0132);transform-origin:0 0;">Default Serial Number</div><div class="t" id="t70" style="left:590.6px;top:1448.92px;font-size:19px;color:#484848;font-weight:700;transform:scaleX(0.9315);transform-origin:0 0;">CF2J3FSQCKQ2</div><div class="b" style="left:902px;top:1397px;width:1px;height:89px;background:#ececec"></div><div class="t" id="t71" style="left:932.6px;top:1417.11px;font-size:17px;color:#808080;transform:scaleX(1.0291);transform-origin:0 0;">Warranty Expiration</div><div class="t" id="t72" style="left:931.6px;top:1448.92px;font-size:19px;color:#484848;font-weight:700;transform:scaleX(1.0110);transform-origin:0 0;">May 11 2020</div><div class="card" style="left:1327px;top:645px;width:546px;height:309px;"></div><div class="t" id="t73" style="left:1369.0px;top:695.45px;font-size:21.2px;color:#a6a6a6;transform:scaleX(0.9640);transform-origin:0 0;">Geolocation</div><svg class="b" style="left:1801px;top:693px;" width="24" height="24" viewBox="0 0 24 24"><g fill="none" stroke="#b5b5b5" stroke-width="2.6"><polyline points="2,8 2,2 8,2"/><polyline points="16,2 22,2 22,8"/><polyline points="22,16 22,22 16,22"/><polyline points="8,22 2,22 2,16"/></g></svg><svg class="b" style="left:1370px;top:766px" width="460" height="144" viewBox="0 0 460 144"><rect width="460" height="144" fill="#d6cdc7"/><rect x="-0.5" y="-18.5" width="20.5" height="20.0" fill="#ded7d2"/><rect x="-0.5" y="4.5" width="20.5" height="19.4" fill="#d6cfca"/><rect x="-0.5" y="26.9" width="20.5" height="19.6" fill="#ded7d2"/><rect x="-0.5" y="49.5" width="20.5" height="19.4" fill="#ded7d2"/><rect x="-0.5" y="71.9" width="20.5" height="18.6" fill="#d6cfca"/><rect x="-0.5" y="93.5" width="20.5" height="21.4" fill="#d6cfca"/><rect x="-0.5" y="117.9" width="20.5" height="19.6" fill="#dcd5d0"/><rect x="-0.5" y="140.5" width="20.5" height="28.0" fill="#dcd5d0"/><rect x="23.0" y="-18.5" width="21.5" height="20.0" fill="#d6cfca"/><rect x="23.0" y="4.5" width="21.5" height="19.4" fill="#ded7d2"/><rect x="23.0" y="26.9" width="21.5" height="19.6" fill="#dad3ce"/><rect x="23.0" y="49.5" width="21.5" height="19.4" fill="#d6cfca"/><rect x="23.0" y="71.9" width="21.5" height="18.6" fill="#dcd5d0"/><rect x="23.0" y="93.5" width="21.5" height="21.4" fill="#d8d0cb"/><rect x="23.0" y="117.9" width="21.5" height="19.6" fill="#ded7d2"/><rect x="23.0" y="140.5" width="21.5" height="28.0" fill="#d4ccc7"/><rect x="47.5" y="-18.5" width="19.5" height="20.0" fill="#dcd5d0"/><rect x="47.5" y="4.5" width="19.5" height="19.4" fill="#d8d0cb"/><rect x="47.5" y="26.9" width="19.5" height="19.6" fill="#d6cfca"/><rect x="47.5" y="49.5" width="19.5" height="19.4" fill="#dad3ce"/><rect x="47.5" y="71.9" width="19.5" height="18.6" fill="#dad3ce"/><rect x="47.5" y="93.5" width="19.5" height="21.4" fill="#d8d0cb"/><rect x="47.5" y="117.9" width="19.5" height="19.6" fill="#d6cfca"/><rect x="47.5" y="140.5" width="19.5" height="28.0" fill="#ded7d2"/><rect x="70.0" y="-18.5" width="20.5" height="20.0" fill="#ded7d2"/><rect x="70.0" y="4.5" width="20.5" height="19.4" fill="#dad3ce"/><rect x="70.0" y="26.9" width="20.5" height="19.6" fill="#dad3ce"/><rect x="70.0" y="49.5" width="20.5" height="19.4" fill="#d6cfca"/><rect x="70.0" y="71.9" width="20.5" height="18.6" fill="#dad3ce"/><rect x="70.0" y="93.5" width="20.5" height="21.4" fill="#dcd5d0"/><rect x="70.0" y="117.9" width="20.5" height="19.6" fill="#d6cfca"/><rect x="70.0" y="140.5" width="20.5" height="28.0" fill="#d8d0cb"/><rect x="93.5" y="-18.5" width="21.4" height="20.0" fill="#d6cfca"/><rect x="93.5" y="4.5" width="21.4" height="19.4" fill="#d8d0cb"/><rect x="93.5" y="26.9" width="21.4" height="19.6" fill="#d8d0cb"/><rect x="93.5" y="49.5" width="21.4" height="19.4" fill="#d8d0cb"/><rect x="93.5" y="71.9" width="21.4" height="18.6" fill="#dcd5d0"/><rect x="93.5" y="93.5" width="21.4" height="21.4" fill="#dcd5d0"/><rect x="93.5" y="117.9" width="21.4" height="19.6" fill="#d6cfca"/><rect x="93.5" y="140.5" width="21.4" height="28.0" fill="#d8d0cb"/><rect x="117.9" y="-18.5" width="20.6" height="20.0" fill="#ded7d2"/><rect x="117.9" y="4.5" width="20.6" height="19.4" fill="#d4ccc7"/><rect x="117.9" y="26.9" width="20.6" height="19.6" fill="#ded7d2"/><rect x="117.9" y="49.5" width="20.6" height="19.4" fill="#d6cfca"/><rect x="117.9" y="71.9" width="20.6" height="18.6" fill="#dcd5d0"/><rect x="117.9" y="93.5" width="20.6" height="21.4" fill="#d6cfca"/><rect x="117.9" y="117.9" width="20.6" height="19.6" fill="#dcd5d0"/><rect x="117.9" y="140.5" width="20.6" height="28.0" fill="#dad3ce"/><rect x="141.5" y="-18.5" width="21.4" height="20.0" fill="#d4ccc7"/><rect x="141.5" y="4.5" width="21.4" height="19.4" fill="#ded7d2"/><rect x="141.5" y="26.9" width="21.4" height="19.6" fill="#d8d0cb"/><rect x="141.5" y="49.5" width="21.4" height="19.4" fill="#dad3ce"/><rect x="141.5" y="71.9" width="21.4" height="18.6" fill="#d8d0cb"/><rect x="141.5" y="93.5" width="21.4" height="21.4" fill="#ded7d2"/><rect x="141.5" y="117.9" width="21.4" height="19.6" fill="#dad3ce"/><rect x="141.5" y="140.5" width="21.4" height="28.0" fill="#d4ccc7"/><rect x="165.9" y="-18.5" width="19.6" height="20.0" fill="#ded7d2"/><rect x="165.9" y="4.5" width="19.6" height="19.4" fill="#d6cfca"/><rect x="165.9" y="26.9" width="19.6" height="19.6" fill="#d8d0cb"/><rect x="165.9" y="49.5" width="19.6" height="19.4" fill="#dad3ce"/><rect x="165.9" y="71.9" width="19.6" height="18.6" fill="#d4ccc7"/><rect x="165.9" y="93.5" width="19.6" height="21.4" fill="#d4ccc7"/><rect x="165.9" y="117.9" width="19.6" height="19.6" fill="#dcd5d0"/><rect x="165.9" y="140.5" width="19.6" height="28.0" fill="#d6cfca"/><rect x="188.5" y="-18.5" width="21.4" height="20.0" fill="#d4ccc7"/><rect x="188.5" y="4.5" width="21.4" height="19.4" fill="#d8d0cb"/><rect x="188.5" y="26.9" width="21.4" height="19.6" fill="#d8d0cb"/><rect x="188.5" y="49.5" width="21.4" height="19.4" fill="#d6cfca"/><rect x="188.5" y="71.9" width="21.4" height="18.6" fill="#d8d0cb"/><rect x="188.5" y="93.5" width="21.4" height="21.4" fill="#ded7d2"/><rect x="188.5" y="117.9" width="21.4" height="19.6" fill="#d8d0cb"/><rect x="188.5" y="140.5" width="21.4" height="28.0" fill="#d4ccc7"/><rect x="212.9" y="-18.5" width="21.6" height="20.0" fill="#ded7d2"/><rect x="212.9" y="4.5" width="21.6" height="19.4" fill="#d8d0cb"/><rect x="212.9" y="26.9" width="21.6" height="19.6" fill="#d8d0cb"/><rect x="212.9" y="49.5" width="21.6" height="19.4" fill="#dad3ce"/><rect x="212.9" y="71.9" width="21.6" height="18.6" fill="#d8d0cb"/><rect x="212.9" y="93.5" width="21.6" height="21.4" fill="#dcd5d0"/><rect x="212.9" y="117.9" width="21.6" height="19.6" fill="#dcd5d0"/><rect x="212.9" y="140.5" width="21.6" height="28.0" fill="#d8d0cb"/><g transform="skewY(-2.2) skewX(1.2)"><g stroke="#f6f4f2" stroke-width="2.3"><line x1="-2" y1="-20" x2="-2" y2="170"/><line x1="21.5" y1="-20" x2="21.5" y2="170"/><line x1="46" y1="-20" x2="46" y2="170"/><line x1="68.5" y1="-20" x2="68.5" y2="170"/><line x1="92" y1="-20" x2="92" y2="170"/><line x1="116.4" y1="-20" x2="116.4" y2="170"/><line x1="140" y1="-20" x2="140" y2="170"/><line x1="164.4" y1="-20" x2="164.4" y2="170"/><line x1="187" y1="-20" x2="187" y2="170"/><line x1="211.4" y1="-20" x2="211.4" y2="170"/><line x1="236" y1="-20" x2="236" y2="170"/><line x1="-5" y1="8" x2="240" y2="8"/><line x1="-5" y1="30.4" x2="240" y2="30.4"/><line x1="-5" y1="53" x2="240" y2="53"/><line x1="-5" y1="75.4" x2="240" y2="75.4"/><line x1="-5" y1="97" x2="240" y2="97"/><line x1="-5" y1="121.4" x2="240" y2="121.4"/><line x1="-5" y1="144" x2="240" y2="144"/></g></g><rect x="166" y="45" width="8" height="14" fill="#a8928c"/><rect x="77" y="51" width="14" height="10" fill="#c6e9c0"/><rect x="160" y="112" width="10" height="8" fill="#a8928c"/><path d="M19.5 0 H24 L26.4 144 H22 Z" fill="#f6f4f1"/><path d="M39 0 H45 L47 144 H45 Z" fill="#f6f4f1"/><path d="M24 0 H39 L45 144 H26.4 Z" fill="#e9a390"/><path d="M68.5 0 L139 49" stroke="#f0eeb2" stroke-width="6"/><path d="M172 84 L113.5 144" stroke="#f0eeb2" stroke-width="8"/><rect x="231" y="0" width="229" height="144" fill="#d2eccd"/><rect x="243" y="0" width="22" height="144" fill="#cfe8d2"/><g fill="#d88a7a"><circle cx="245" cy="8.0" r="0.9"/><circle cx="252" cy="14.3" r="0.9"/><circle cx="259" cy="20.6" r="0.9"/><circle cx="246" cy="26.9" r="0.9"/><circle cx="253" cy="33.2" r="0.9"/><circle cx="260" cy="39.5" r="0.9"/><circle cx="247" cy="45.8" r="0.9"/><circle cx="254" cy="52.1" r="0.9"/><circle cx="261" cy="58.4" r="0.9"/><circle cx="248" cy="64.7" r="0.9"/><circle cx="255" cy="71.0" r="0.9"/><circle cx="262" cy="77.3" r="0.9"/><circle cx="249" cy="83.6" r="0.9"/><circle cx="256" cy="89.9" r="0.9"/><circle cx="263" cy="96.2" r="0.9"/><circle cx="250" cy="102.5" r="0.9"/><circle cx="257" cy="108.8" r="0.9"/><circle cx="264" cy="115.1" r="0.9"/><circle cx="251" cy="121.4" r="0.9"/><circle cx="258" cy="127.7" r="0.9"/><circle cx="245" cy="134.0" r="0.9"/><circle cx="252" cy="140.3" r="0.9"/></g><rect x="265" y="0" width="18" height="144" fill="#f3f0c4"/><rect x="270" y="0" width="7" height="144" fill="#77777a"/><rect x="272" y="0" width="3" height="144" fill="#b9b9bb"/><rect x="283" y="8" width="45" height="136" fill="#e3dfdc"/><rect x="288.7" y="9" width="37.3" height="51.6" fill="#abd0df"/><rect x="288.7" y="66.5" width="37.3" height="77.5" fill="#abd0df"/><rect x="326" y="8" width="19" height="136" fill="#e6e3e6"/><path d="M345 32 L375 20 L394 105 L345 98 Z" fill="#cbf3cf"/><path d="M350 98 L392 105 L400 125 L350 130 Z" fill="#f4f2f0"/><path d="M370 8 L389.5 8 L419 144 L399 144 Z" fill="#f1efbd"/><path d="M386.5 0 L414 0 L449 144 L419 144 Z" fill="#aad2de"/><path d="M414 0 L460 0 L460 144 L449 144 Z" fill="#d8f0c9"/><g fill="#7fb0da"><rect x="424" y="4.0" width="7" height="1.8"/><rect x="437" y="13.5" width="7" height="1.8"/><rect x="450" y="23.0" width="7" height="1.8"/><rect x="431" y="32.5" width="7" height="1.8"/><rect x="444" y="42.0" width="7" height="1.8"/><rect x="425" y="51.5" width="7" height="1.8"/><rect x="438" y="61.0" width="7" height="1.8"/><rect x="451" y="70.5" width="7" height="1.8"/><rect x="432" y="80.0" width="7" height="1.8"/><rect x="445" y="89.5" width="7" height="1.8"/><rect x="426" y="99.0" width="7" height="1.8"/><rect x="439" y="108.5" width="7" height="1.8"/><rect x="452" y="118.0" width="7" height="1.8"/><rect x="433" y="127.5" width="7" height="1.8"/><rect x="446" y="137.0" width="7" height="1.8"/></g><path d="M228 1 H385 L389 10 H228 Z" fill="#f1efbd"/><path d="M287 134 H414 L416 141 H287 Z" fill="#f1efbd"/><path d="M0 86.6 L148.7 75.3 L230 81" stroke="#edc186" stroke-width="7.5" fill="none"/><rect x="171" y="62" width="34" height="23" rx="11" fill="#bcc7b5" stroke="#edc186" stroke-width="4"/><ellipse cx="240" cy="58" rx="13" ry="21" fill="#c6ecc6"/><path d="M225 0 C226 22 256 34 257 60 C258 82 238 96 236 116 L235 144" stroke="#edc186" stroke-width="9" fill="none"/><path d="M201 62 C214 52 227 42 237 27" stroke="#edc186" stroke-width="6" fill="none"/><g fill="#5a5fa2"><rect x="10" y="82.6" width="8" height="8"/><rect x="42" y="79.6" width="8" height="8"/><rect x="78" y="76.7" width="8" height="8"/><rect x="146.2" y="70.8" width="8" height="8"/><rect x="151.6" y="94.3" width="8" height="8"/><rect x="202.5" y="75.2" width="8" height="8"/><rect x="61.5" y="-5" width="8" height="8"/></g><text transform="translate(19,18) rotate(90)" font-family="Liberation Sans" font-size="12.5" fill="#333" stroke="#f4f2ef" stroke-width="2" paint-order="stroke">Cerrito</text><text transform="translate(336,25) rotate(90)" font-family="Liberation Sans" font-size="14.5" fill="#333" stroke="#f4f2ef" stroke-width="2" paint-order="stroke">Juana Manso</text><text transform="translate(269,112) rotate(90)" font-family="Liberation Sans" font-size="14" fill="#333">Avenida</text><text x="286" y="119.8" font-family="Liberation Sans" font-size="19.5" fill="#7a7a7c" stroke="#fff" stroke-width="2.5" paint-order="stroke" textLength="141" lengthAdjust="spacingAndGlyphs">Puerto Madero</text><text x="-12" y="141" font-family="Liberation Sans" font-size="20" fill="#5a5a5a" stroke="#eee" stroke-width="2" paint-order="stroke">errat</text><defs><linearGradient id="pg" x1="0" x2="1"><stop offset="0" stop-color="#3a80c9"/><stop offset="1" stop-color="#2a68b2"/></linearGradient></defs><path d="M157 40 L160 60 L153 61 Z" fill="#1f3f6a" opacity=".6"/><path d="M149.5 63 C143 49 132 39 132 25 C132 15 140 7.3 149.5 7.3 C159 7.3 167 15 167 25 C167 39 156 49 149.5 63 Z" fill="url(#pg)" stroke="#2a5f9e" stroke-width="0.8"/><circle cx="149.7" cy="24.4" r="5.9" fill="#fff"/></svg><div class="card" style="left:1327px;top:983px;width:546px;height:206px;"></div><div class="t" id="t74" style="left:1369.1px;top:1028.75px;font-size:21.2px;color:#a6a6a6;transform:scaleX(0.9449);transform-origin:0 0;">Custom fields</div><div class="t" id="t75" style="left:1369.0px;top:1092.81px;font-size:17px;color:#808080;">Business Department</div><div class="t" id="t76" style="left:1369.0px;top:1124.52px;font-size:19px;color:#333;font-weight:700;transform:scaleX(0.9923);transform-origin:0 0;">HR</div><div class="card" style="left:1327px;top:1218px;width:546px;height:143px;"></div><div class="t" id="t77" style="left:1369.1px;top:1262.85px;font-size:21.2px;color:#4a74c0;font-weight:700;transform:scaleX(0.8660);transform-origin:0 0;">Requests</div><div class="t" id="t78" style="left:1369.0px;top:1296.72px;font-size:19px;color:#777;">By type</div><div class="t" id="t79" style="left:1801.8px;top:1265.64px;font-size:48.5px;color:#d4d4d4;font-weight:700;transform:scaleX(1.0870);transform-origin:0 0;">0</div><div class="card" style="left:1903px;top:896px;width:547px;height:216px;"></div><div class="t" id="t80" style="left:1946.5px;top:947.25px;font-size:21.2px;color:#a6a6a6;transform:scaleX(0.8378);transform-origin:0 0;">Tags</div><svg class="b" style="left:2371px;top:944px;" width="28" height="25" viewBox="0 0 29 26"><path d="M12.5 5.6 H6.3 Q3.8 5.6 3.8 8.1 V19.9 Q3.8 22.4 6.3 22.4 H18.1 Q20.6 22.4 20.6 19.9 V14.5" fill="none" stroke="#cfcfcf" stroke-width="2.9" stroke-linecap="round"/><path d="M9.3 19.9 L10.6 14.6 L20.6 4.6 L24.4 8.4 L14.4 18.4 Z" fill="#cfcfcf"/><path d="M22 3.2 L23.9 1.3 Q24.6 0.6 25.3 1.3 L27.7 3.7 Q28.4 4.4 27.7 5.1 L25.8 7 Z" fill="#cfcfcf"/></svg><div class="b" style="left:1960px;top:1036px;width:30px;height:8px;background:#4db6bf;border-radius:4px"></div><div class="t" id="t81" style="left:2010.6px;top:1030.62px;font-size:19px;color:#555;transform:scaleX(0.9877);transform-origin:0 0;">all-computers</div><div class="card" style="left:1903px;top:1141px;width:547px;height:199px;"></div><div class="t" id="t82" style="left:1945.7px;top:1187.05px;font-size:21.2px;color:#a6a6a6;transform:scaleX(0.8901);transform-origin:0 0;">OS Users</div><svg class="b" style="left:1943px;top:1246px;" width="64" height="52" viewBox="0 0 64 52"><circle cx="23" cy="13.4" r="11" fill="#5b7fc2"/><path d="M2.7 44 V38 C2.7 32 7.5 28.5 14 28.5 H35 V47.6 H6.3 Q2.7 47.6 2.7 44 Z" fill="#5b7fc2"/><circle cx="47.6" cy="34.9" r="14.6" fill="#fff"/><circle cx="47.6" cy="34.9" r="12.4" fill="#5b7fc2"/><path d="M47 28 V36.5 H53.5" fill="none" stroke="#fff" stroke-width="2.8"/></svg><div class="t" id="t83" style="left:2019.1px;top:1248.72px;font-size:19px;color:#484848;font-weight:700;transform:scaleX(0.9231);transform-origin:0 0;">invgate</div><div class="t" id="t84" style="left:2019.1px;top:1274.39px;font-size:17.5px;color:#9a9a9a;transform:scaleX(0.9420);transform-origin:0 0;">Logged in a year ago. Seen active a year ago</div><div class="card" style="left:1903px;top:1370px;width:547px;height:230px;"></div><div class="t" id="t85" style="left:1945.6px;top:1420.05px;font-size:21.2px;color:#a6a6a6;transform:scaleX(0.9632);transform-origin:0 0;">Attachments</div><svg class="b" style="left:2378px;top:1419px;" width="22" height="22" viewBox="0 0 22 22"><g stroke="#cfcfcf" stroke-width="3"><line x1="11" y1="1" x2="11" y2="21"/><line x1="1" y1="11" x2="21" y2="11"/></g></svg><div class="t" id="t86" style="left:2102.8px;top:1508.34px;font-size:18.5px;color:#aaa;transform:scaleX(1.0214);transform-origin:0 0;">No files uploaded</div><div class="b" style="left:2478px;top:71px;width:22px;height:1484px;background:#fafafa;border-left:1px solid #ececec"></div><div class="b" style="left:2484px;top:87px;width:13px;height:939px;background:#c2c2c2;border-radius:7px"></div></body></html>
